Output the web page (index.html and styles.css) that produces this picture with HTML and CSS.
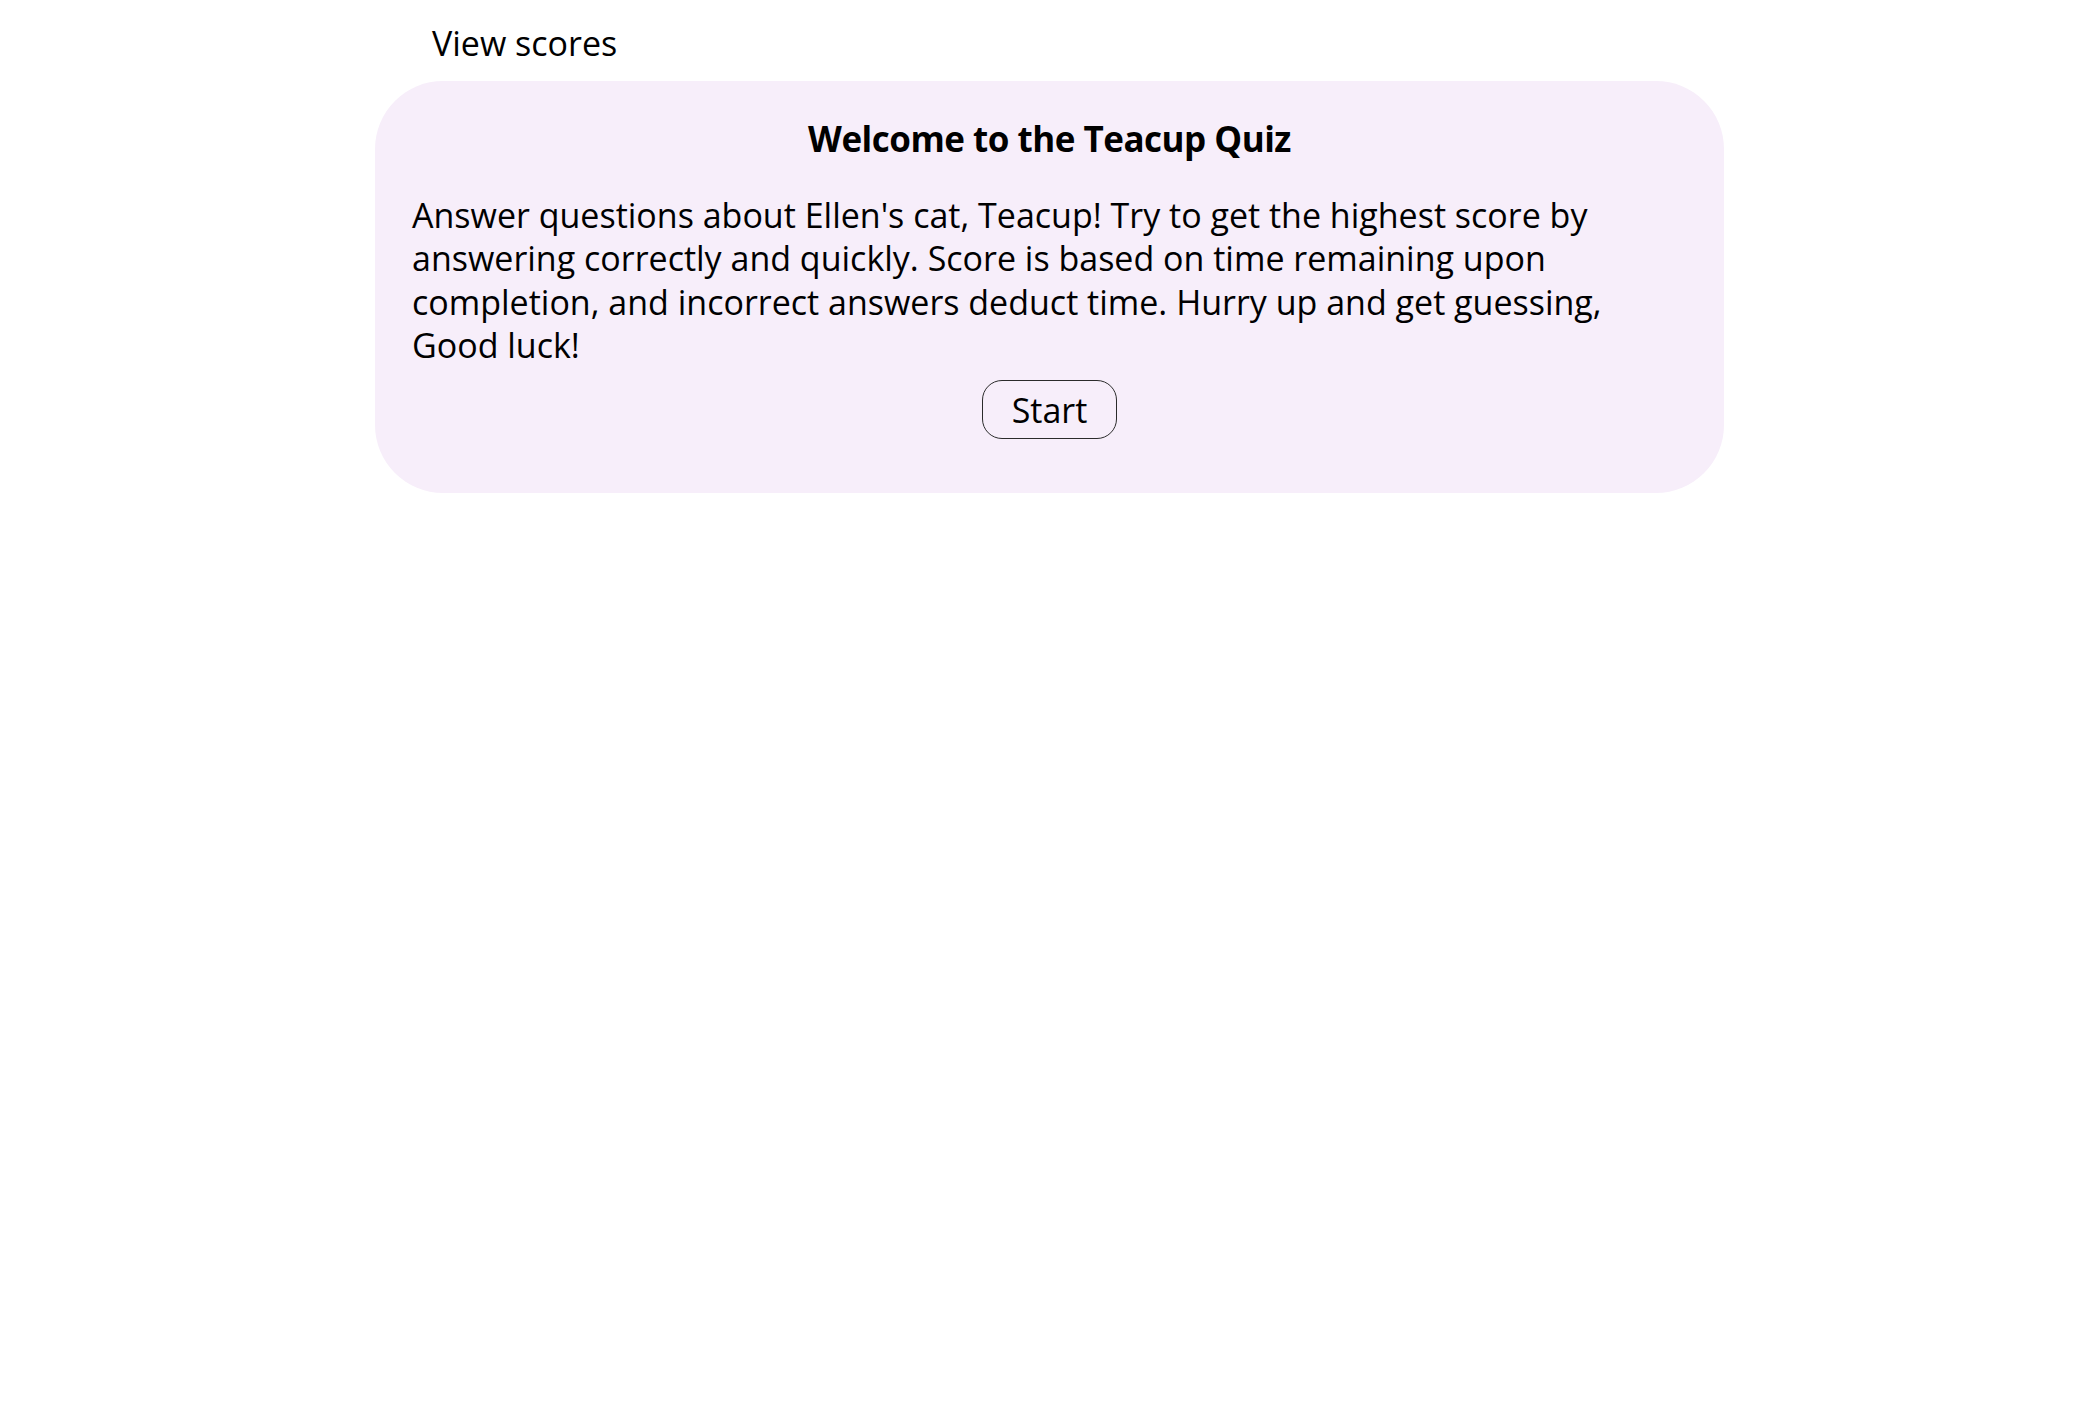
FILE: index.html
```html
<!DOCTYPE html>
<html lang="en">
<head>
<meta charset="utf-8">
<title>Teacup Quiz</title>
<link rel="stylesheet" href="styles.css">
</head>
<body>
<div class="page">
  <header class="top">
    <a class="scores-link">View scores</a>
  </header>
  <main class="card">
    <h1 class="title">Welcome to the Teacup Quiz</h1>
    <p class="intro">Answer questions about Ellen's cat, Teacup! Try to get the highest score by answering correctly and quickly. Score is based on time remaining upon completion, and incorrect answers deduct time. Hurry up and get guessing, Good luck!</p>
    <div class="actions">
      <button class="start-btn" type="button">Start</button>
    </div>
  </main>
</div>
</body>
</html>
```

FILE: styles.css
```css
html, body {
  margin: 0;
  padding: 0;
  background: #ffffff;
}

body {
  font-family: "Open Sans", "Noto Sans", sans-serif;
  color: #000000;
}

.page {
  width: 1349px;
  margin: 0 auto;
}

.top {
  padding: 20px 0 15px 57px;
  font-size: 34px;
  line-height: 46px;
}

.scores-link {
  color: #000000;
  text-decoration: none;
  cursor: pointer;
}

.card {
  background: #f7eefa;
  border-radius: 68px;
  padding: 35px 37px 54px;
}

.title {
  margin: 0;
  text-align: center;
  font-size: 35px;
  line-height: 46px;
  font-weight: 700;
  letter-spacing: -0.5px;
}

.intro {
  margin: 32px 0 0;
  font-size: 34px;
  line-height: 43.33px;
}

.actions {
  display: flex;
  justify-content: center;
  margin-top: 13px;
}

.start-btn {
  font-family: inherit;
  font-size: 34px;
  line-height: 43px;
  padding: 8px 29px 6px;
  border: 1px solid #2b2b2b;
  border-radius: 20px;
  background: transparent;
  color: #000000;
}
```
